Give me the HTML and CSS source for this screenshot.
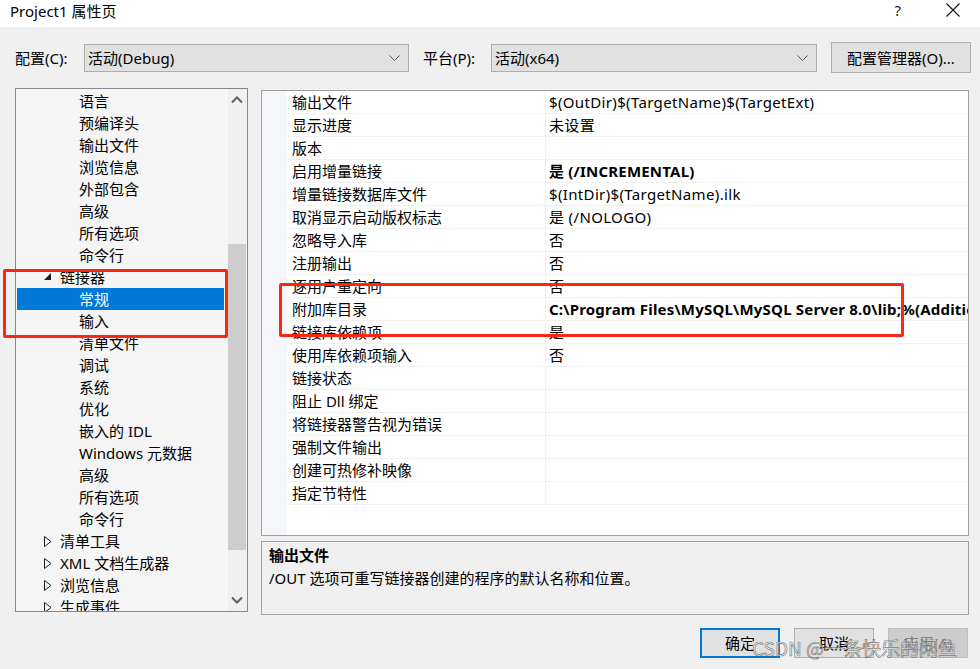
FILE: index.html
```html
<!DOCTYPE html>
<html lang="zh-CN">
<head>
<meta charset="utf-8">
<title>Project1 属性页</title>
<link rel="stylesheet" href="styles.css">
</head>
<body>
<div class="dialog">
  <div class="titlebar">
    <span class="title">Project1 属性页</span>
    <span class="tb-buttons">
      <span class="help">?</span>
      <svg class="close" width="16" height="16" viewBox="0 0 16 16"><path d="M1.5 1.5 L14.5 14.5 M14.5 1.5 L1.5 14.5" stroke="#111" stroke-width="1.1" fill="none"/></svg>
    </span>
  </div>

  <div class="configbar">
    <span class="label cfg-label">配置(C):</span>
    <div class="combo combo-cfg"><span>活动(Debug)</span><svg class="chev" width="11" height="6" viewBox="0 0 11 6"><path d="M0.5 0.5 L5.5 5.5 L10.5 0.5" stroke="#555" stroke-width="1" fill="none"/></svg></div>
    <span class="label plat-label">平台(P):</span>
    <div class="combo combo-plat"><span>活动(x64)</span><svg class="chev" width="11" height="6" viewBox="0 0 11 6"><path d="M0.5 0.5 L5.5 5.5 L10.5 0.5" stroke="#555" stroke-width="1" fill="none"/></svg></div>
    <button class="btn btn-mgr">配置管理器(O)...</button>
  </div>

  <div class="main">
    <div class="tree">
      <div class="tree-content">
        <div class="node l2">语言</div>
        <div class="node l2">预编译头</div>
        <div class="node l2">输出文件</div>
        <div class="node l2">浏览信息</div>
        <div class="node l2">外部包含</div>
        <div class="node l2">高级</div>
        <div class="node l2">所有选项</div>
        <div class="node l2">命令行</div>
        <div class="node l1"><svg class="exp" width="8" height="8" viewBox="0 0 8 8"><path d="M7 0 L7 7 L0 7 Z" fill="#1e1e1e"/></svg>链接器</div>
        <div class="node l2 selected">常规</div>
        <div class="node l2">输入</div>
        <div class="node l2">清单文件</div>
        <div class="node l2">调试</div>
        <div class="node l2">系统</div>
        <div class="node l2">优化</div>
        <div class="node l2">嵌入的 IDL</div>
        <div class="node l2">Windows 元数据</div>
        <div class="node l2">高级</div>
        <div class="node l2">所有选项</div>
        <div class="node l2">命令行</div>
        <div class="node l1"><svg class="exp" width="8" height="11" viewBox="0 0 8 11"><path d="M0.5 0.5 L7 5.5 L0.5 10.5 Z" stroke="#1e1e1e" stroke-width="1" fill="none"/></svg>清单工具</div>
        <div class="node l1"><svg class="exp" width="8" height="11" viewBox="0 0 8 11"><path d="M0.5 0.5 L7 5.5 L0.5 10.5 Z" stroke="#1e1e1e" stroke-width="1" fill="none"/></svg>XML 文档生成器</div>
        <div class="node l1"><svg class="exp" width="8" height="11" viewBox="0 0 8 11"><path d="M0.5 0.5 L7 5.5 L0.5 10.5 Z" stroke="#1e1e1e" stroke-width="1" fill="none"/></svg>浏览信息</div>
        <div class="node l1"><svg class="exp" width="8" height="11" viewBox="0 0 8 11"><path d="M0.5 0.5 L7 5.5 L0.5 10.5 Z" stroke="#1e1e1e" stroke-width="1" fill="none"/></svg>生成事件</div>
      </div>
      <div class="vscroll">
        <svg class="sarrow" width="12" height="8" viewBox="0 0 12 8"><path d="M1 6.5 L6 1.5 L11 6.5" stroke="#606060" stroke-width="2" fill="none"/></svg>
        <div class="strack"><div class="sthumb"></div></div>
        <svg class="sarrow" width="12" height="8" viewBox="0 0 12 8"><path d="M1 1.5 L6 6.5 L11 1.5" stroke="#606060" stroke-width="2" fill="none"/></svg>
      </div>
    </div>

    <div class="right">
      <div class="grid">
        <div class="gutter"></div>
        <div class="rows">
          <div class="row"><span class="name">输出文件</span><span class="val">$(OutDir)$(TargetName)$(TargetExt)</span></div>
          <div class="row"><span class="name">显示进度</span><span class="val">未设置</span></div>
          <div class="row"><span class="name">版本</span><span class="val"></span></div>
          <div class="row"><span class="name">启用增量链接</span><span class="val bold">是 (/INCREMENTAL)</span></div>
          <div class="row"><span class="name">增量链接数据库文件</span><span class="val">$(IntDir)$(TargetName).ilk</span></div>
          <div class="row"><span class="name">取消显示启动版权标志</span><span class="val">是 (/NOLOGO)</span></div>
          <div class="row"><span class="name">忽略导入库</span><span class="val">否</span></div>
          <div class="row"><span class="name">注册输出</span><span class="val">否</span></div>
          <div class="row"><span class="name">逐用户重定向</span><span class="val">否</span></div>
          <div class="row"><span class="name">附加库目录</span><span class="val bold">C:\Program Files\MySQL\MySQL Server 8.0\lib;%(AdditionalLibraryDirectories)</span></div>
          <div class="row"><span class="name">链接库依赖项</span><span class="val">是</span></div>
          <div class="row"><span class="name">使用库依赖项输入</span><span class="val">否</span></div>
          <div class="row"><span class="name">链接状态</span><span class="val"></span></div>
          <div class="row"><span class="name">阻止 Dll 绑定</span><span class="val"></span></div>
          <div class="row"><span class="name">将链接器警告视为错误</span><span class="val"></span></div>
          <div class="row"><span class="name">强制文件输出</span><span class="val"></span></div>
          <div class="row"><span class="name">创建可热修补映像</span><span class="val"></span></div>
          <div class="row"><span class="name">指定节特性</span><span class="val"></span></div>
        </div>
      </div>
      <div class="desc">
        <div class="desc-title">输出文件</div>
        <div class="desc-text">/OUT 选项可重写链接器创建的程序的默认名称和位置。</div>
      </div>
    </div>
  </div>

  <div class="footer">
    <button class="btn btn-ok">确定</button>
    <button class="btn btn-foot">取消</button>
    <button class="btn btn-foot btn-disabled">应用(A)</button>
  </div>

  <div class="mark mark-tree"></div>
  <div class="mark mark-grid"></div>
  <div class="watermark">CSDN @一条快乐的闲鱼</div>
</div>
</body>
</html>
```
FILE: styles.css
```css
* { box-sizing: border-box; }
html, body { margin: 0; padding: 0; }
body {
  width: 980px;
  height: 669px;
  overflow: hidden;
  background: #f0f0f0;
  font-family: "Noto Sans", "Noto Sans CJK SC", sans-serif;
  font-size: 15px;
  color: #000;
}
.dialog { position: relative; width: 980px; height: 669px; }

.titlebar {
  height: 27px;
  background: #fff;
  display: flex;
  align-items: center;
  justify-content: space-between;
  padding: 0 19px 0 10px;
}
.title { font-size: 15px; line-height: 20px; margin-top: -6px; }
.tb-buttons { display: flex; align-items: center; gap: 44px; margin-top: -8px; }
.help { font-size: 15px; line-height: 18px; color: #222; }
.close { display: block; }

.configbar {
  display: flex;
  align-items: center;
  height: 31px;
  margin-top: 15px;
  padding-left: 15px;
}
.label { line-height: 20px; }
.cfg-label { width: 69px; }
.plat-label { margin-left: 14px; width: 68px; }
.combo {
  height: 28px;
  background: #e1e1e1;
  border: 1px solid #adadad;
  display: flex;
  align-items: center;
  justify-content: space-between;
  padding: 0 8px 0 3px;
  line-height: 20px;
}
.combo-cfg { width: 325px; }
.combo-plat { width: 326px; }
.chev { display: block; }
.btn {
  font: inherit;
  font-size: 15px;
  background: #e1e1e1;
  border: 1px solid #adadad;
  color: #000;
  padding: 0;
  line-height: 20px;
}
.btn-mgr { margin-left: 14px; width: 140px; height: 31px; }

.main {
  display: flex;
  margin-top: 15px;
  padding-left: 15px;
  gap: 13px;
}
.tree {
  width: 233px;
  height: 524px;
  border: 1px solid #828790;
  background: #f5f5f5;
  display: flex;
}
.tree-content {
  width: 210px;
  height: 522px;
  overflow: hidden;
  padding-top: 1px;
}
.node {
  height: 22px;
  line-height: 22px;
  white-space: nowrap;
  display: flex;
  align-items: center;
}
.l2 { padding-left: 63px; }
.l1 { padding-left: 28px; }
.exp { display: block; margin-right: 8px; flex: none; }
.selected {
  background: #0078d7;
  color: #fff;
  margin-left: 1px;
  width: 207px;
  padding-left: 62px;
}
.vscroll {
  width: 21px;
  background: #f0f0f0;
  display: flex;
  flex-direction: column;
  align-items: center;
  border-left: 1px solid #fafafa;
}
.sarrow { display: block; margin: 7px 0; flex: none; }
.strack { flex: 1; width: 100%; padding: 0 1px; position: relative; }
.sthumb {
  margin-top: 133px;
  height: 306px;
  background: #cdcdcd;
}

.right { display: flex; flex-direction: column; gap: 5px; margin-top: 2px; }
.grid {
  width: 708px;
  height: 446px;
  border: 1px solid #a0a0a0;
  background: #fff;
  display: flex;
  overflow: hidden;
}
.gutter { width: 25px; flex: none; background: #f4f6f9; }
.rows { flex: 1; min-width: 0; }
.row {
  height: 23px;
  border-bottom: 1px solid #f0f0f3;
  display: flex;
  line-height: 22px;
  white-space: nowrap;
}
.name {
  width: 259px;
  flex: none;
  padding-left: 5px;
  border-right: 1px solid #f0f0f3;
}
.val { padding-left: 3px; overflow: hidden; letter-spacing: 0.35px; }
.bold { font-weight: bold; letter-spacing: 0.2px; }

.desc {
  width: 708px;
  height: 74px;
  border: 1px solid #a0a0a0;
  background: #f0f0f0;
  padding: 2px 7px;
  line-height: 23px;
}
.desc-title { font-weight: bold; }

.footer {
  display: flex;
  justify-content: flex-end;
  gap: 14px;
  padding-right: 12px;
  margin-top: 13px;
}
.btn-ok, .btn-foot { width: 80px; height: 30px; }
.btn-ok { border: 2px solid #0078d7; }
.btn-disabled { background: #cccccc; border-color: #bfbfbf; color: #838383; }

.mark {
  position: absolute;
  border: 3px solid #fa2812;
  border-radius: 2px;
}
.mark-tree { left: 3px; top: 269px; width: 225px; height: 69px; }
.mark-grid { left: 279px; top: 283px; width: 625px; height: 54px; }

.watermark {
  position: absolute;
  left: 752px;
  top: 635px;
  font-family: "Noto Sans CJK SC", sans-serif;
  font-size: 19px;
  line-height: 26px;
  color: rgba(255, 255, 255, 0.6);
  -webkit-text-stroke: 0.7px rgba(95, 95, 95, 0.8);
  white-space: nowrap;
}
```
